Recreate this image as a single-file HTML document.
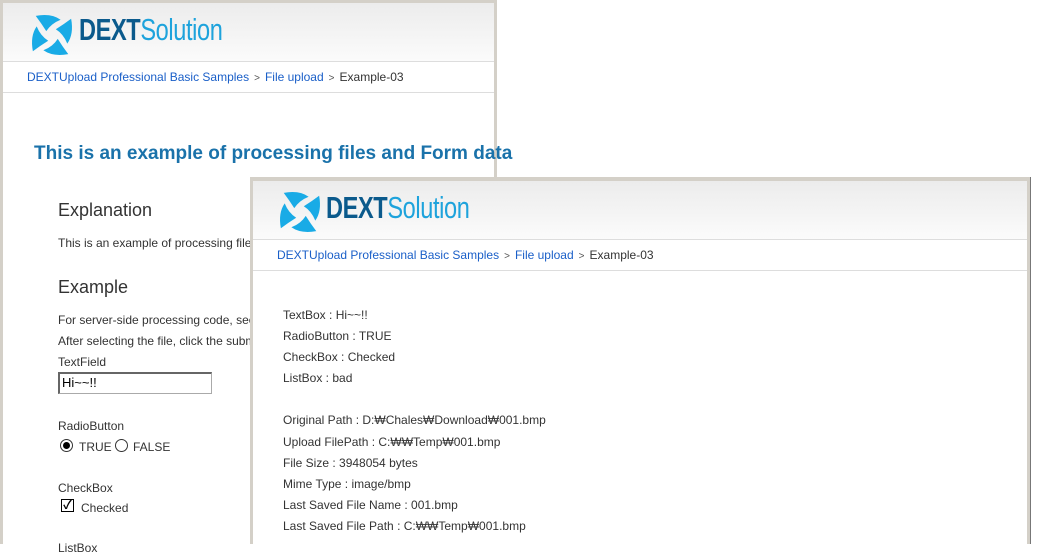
<!DOCTYPE html>
<html><head><meta charset="utf-8"><style>
*{margin:0;padding:0;box-sizing:border-box}
body{width:1037px;height:544px;background:#fff;position:relative;overflow:hidden;font-family:"Liberation Sans","Noto Sans CJK KR",sans-serif;font-size:12px;color:#333}
.win{position:absolute;background:#fff;border:3px solid #d4d0c8;border-bottom:none}
.hdr{height:59px;background:linear-gradient(#ececec,#fbfbfb);border-bottom:1px solid #ddd;position:relative}
.logo{position:absolute;top:8px;left:24px;height:46px}
.brand{position:absolute;top:9px;font-size:31px;transform:scaleX(.76);transform-origin:left;white-space:nowrap;letter-spacing:-0.5px}
.brand b{color:#0b5a8c;font-weight:bold}
.brand span{color:#1ea3dc}
.bc{height:31px;border-bottom:1px solid #ddd;line-height:31px;padding-left:24px;font-size:12px}
.bc a{color:#1a5fc8;text-decoration:none}
.bc i{font-style:normal;color:#555;font-size:10px;margin:0 5px}
.p{position:absolute;white-space:nowrap}
</style></head><body>
<div class="win" style="left:0;top:0;width:497px;height:544px">
 <div class="hdr">
  <svg class="logo" viewBox="0 0 46 46" width="44" height="44" style="left:27px;top:9px"><g fill="#19abe6">
  <path d="M6 3 Q22 0 32 7 Q22 11 17 19 Q12 11 6 3Z"/>
  <path d="M43 6 Q46 22 39 32 Q35 22 27 17 Q35 12 43 6Z"/>
  <path d="M40 43 Q24 46 14 39 Q24 35 29 27 Q34 35 40 43Z"/>
  <path d="M3 40 Q0 24 7 14 Q11 24 19 29 Q11 34 3 40Z"/></g></svg>
  <div class="brand" style="left:76px"><b>DEXT</b><span>Solution</span></div>
 </div>
 <div class="bc"><a>DEXTUpload Professional Basic Samples</a><i>&gt;</i><a>File upload</a><i>&gt;</i>Example-03</div>
 <div class="p" style="left:31px;top:140px;font-size:19px;font-weight:bold;color:#1a72aa">This is an example of processing files and Form data</div>
 <div class="p" style="left:55px;top:197px;font-size:18px;color:#333">Explanation</div>
 <div class="p" style="left:55px;top:233px">This is an example of processing files</div>
 <div class="p" style="left:55px;top:274px;font-size:18px;color:#333">Example</div>
 <div class="p" style="left:55px;top:310px">For server-side processing code, see</div>
 <div class="p" style="left:55px;top:331px">After selecting the file, click the submit</div>
 <div class="p" style="left:55px;top:352px">TextField</div>
 <div class="p" style="left:55px;top:369px;width:154px;height:22px;border:1px solid #aaa;border-top:2px solid #666;border-left:2px solid #666;font-size:13px;padding-left:2px;line-height:18px;color:#000">Hi~~!!</div>
 <div class="p" style="left:55px;top:416px">RadioButton</div>
 <div class="p" style="left:57px;top:436px;width:13px;height:13px;border:1px solid #333;border-radius:50%"><div style="width:7px;height:7px;background:#000;border-radius:50%;margin:2px"></div></div>
 <div class="p" style="left:76px;top:437px">TRUE</div>
 <div class="p" style="left:112px;top:436px;width:13px;height:13px;border:1px solid #333;border-radius:50%"></div>
 <div class="p" style="left:130px;top:437px">FALSE</div>
 <div class="p" style="left:55px;top:478px">CheckBox</div>
 <div class="p" style="left:58px;top:496px;width:13px;height:13px;border:1px solid #000;font-size:12px;line-height:11px;text-align:center;font-weight:bold;color:#000">✓</div>
 <div class="p" style="left:78px;top:498px">Checked</div>
 <div class="p" style="left:55px;top:538px">ListBox</div>
</div>
<div class="win" style="left:250px;top:177px;width:780px;height:367px;border-top-width:4px;box-shadow:1px 0 0 #777">
 <div class="hdr">
  <svg class="logo" viewBox="0 0 46 46" width="44" height="44" style="left:25px;top:8px"><g fill="#19abe6">
  <path d="M6 3 Q22 0 32 7 Q22 11 17 19 Q12 11 6 3Z"/>
  <path d="M43 6 Q46 22 39 32 Q35 22 27 17 Q35 12 43 6Z"/>
  <path d="M40 43 Q24 46 14 39 Q24 35 29 27 Q34 35 40 43Z"/>
  <path d="M3 40 Q0 24 7 14 Q11 24 19 29 Q11 34 3 40Z"/></g></svg>
  <div class="brand" style="left:73px"><b>DEXT</b><span>Solution</span></div>
 </div>
 <div class="bc"><a>DEXTUpload Professional Basic Samples</a><i>&gt;</i><a>File upload</a><i>&gt;</i>Example-03</div>
 <div class="p" style="left:30px;top:124px;line-height:21.1px">TextBox : Hi~~!!<br>RadioButton : TRUE<br>CheckBox : Checked<br>ListBox : bad<br><br>Original Path : D:₩Chales₩Download₩001.bmp<br>Upload FilePath : C:₩₩Temp₩001.bmp<br>File Size : 3948054 bytes<br>Mime Type : image/bmp<br>Last Saved File Name : 001.bmp<br>Last Saved File Path : C:₩₩Temp₩001.bmp</div>
</div>
</body></html>
